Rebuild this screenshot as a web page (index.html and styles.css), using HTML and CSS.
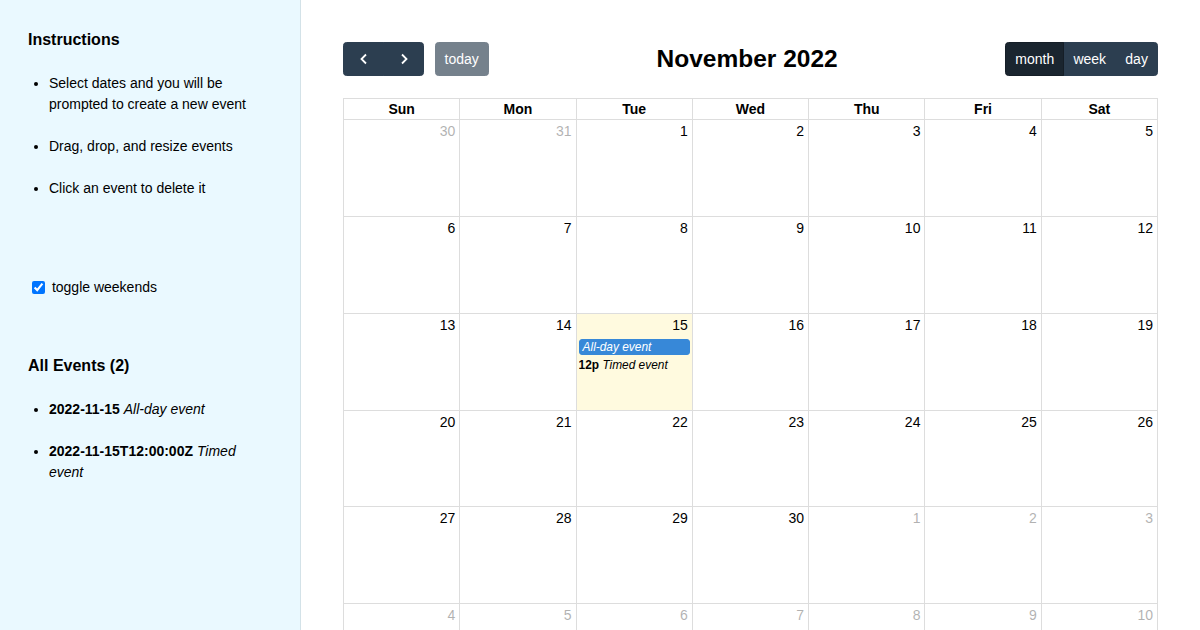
FILE: index.html
```html
<!DOCTYPE html>
<html lang="en">
<head>
    <meta charset="UTF-8">
    <meta name="viewport" content="width=device-width, initial-scale=1.0">
    <title>Calendar Demo</title>
    <link rel="stylesheet" href="styles.css">
</head>
<body>
    <div class="demo-app">
        <div class="sidebar">
            <div class="sidebar-section">
                <h2>Instructions</h2>
                <ul>
                    <li>Select dates and you will be prompted to create a new event</li>
                    <li>Drag, drop, and resize events</li>
                    <li>Click an event to delete it</li>
                </ul>
            </div>
            <div class="sidebar-section">
                <label class="toggle"><input type="checkbox" checked> toggle weekends</label>
            </div>
            <div class="sidebar-section">
                <h2>All Events (2)</h2>
                <ul>
                    <li><b>2022-11-15</b> <i>All-day event</i></li>
                    <li><b>2022-11-15T12:00:00Z</b> <i>Timed event</i></li>
                </ul>
            </div>
        </div>

        <div class="main">
            <div class="toolbar">
                <div class="toolbar-chunk">
                    <div class="btn-group">
                        <button class="btn btn-icon" title="Previous month">
                            <svg width="10" height="12" viewBox="0 0 10 12"><path d="M7 1.5 2.5 6 7 10.5" fill="none" stroke="#fff" stroke-width="1.8"/></svg>
                        </button>
                        <button class="btn btn-icon" title="Next month">
                            <svg width="10" height="12" viewBox="0 0 10 12"><path d="M3 1.5 7.5 6 3 10.5" fill="none" stroke="#fff" stroke-width="1.8"/></svg>
                        </button>
                    </div>
                    <button class="btn btn-today" disabled>today</button>
                </div>
                <h2 class="toolbar-title">November 2022</h2>
                <div class="toolbar-chunk">
                    <div class="btn-group">
                        <button class="btn active">month</button>
                        <button class="btn">week</button>
                        <button class="btn">day</button>
                    </div>
                </div>
            </div>

            <div class="month-grid">
                <div class="col-head">Sun</div>
                <div class="col-head">Mon</div>
                <div class="col-head">Tue</div>
                <div class="col-head">Wed</div>
                <div class="col-head">Thu</div>
                <div class="col-head">Fri</div>
                <div class="col-head">Sat</div>

                <div class="day other"><span class="day-number">30</span></div>
                <div class="day other"><span class="day-number">31</span></div>
                <div class="day"><span class="day-number">1</span></div>
                <div class="day"><span class="day-number">2</span></div>
                <div class="day"><span class="day-number">3</span></div>
                <div class="day"><span class="day-number">4</span></div>
                <div class="day"><span class="day-number">5</span></div>

                <div class="day"><span class="day-number">6</span></div>
                <div class="day"><span class="day-number">7</span></div>
                <div class="day"><span class="day-number">8</span></div>
                <div class="day"><span class="day-number">9</span></div>
                <div class="day"><span class="day-number">10</span></div>
                <div class="day"><span class="day-number">11</span></div>
                <div class="day"><span class="day-number">12</span></div>

                <div class="day"><span class="day-number">13</span></div>
                <div class="day"><span class="day-number">14</span></div>
                <div class="day today">
                    <span class="day-number">15</span>
                    <div class="event event-allday"><i>All-day event</i></div>
                    <div class="event event-timed"><b>12p</b> <i>Timed event</i></div>
                </div>
                <div class="day"><span class="day-number">16</span></div>
                <div class="day"><span class="day-number">17</span></div>
                <div class="day"><span class="day-number">18</span></div>
                <div class="day"><span class="day-number">19</span></div>

                <div class="day"><span class="day-number">20</span></div>
                <div class="day"><span class="day-number">21</span></div>
                <div class="day"><span class="day-number">22</span></div>
                <div class="day"><span class="day-number">23</span></div>
                <div class="day"><span class="day-number">24</span></div>
                <div class="day"><span class="day-number">25</span></div>
                <div class="day"><span class="day-number">26</span></div>

                <div class="day"><span class="day-number">27</span></div>
                <div class="day"><span class="day-number">28</span></div>
                <div class="day"><span class="day-number">29</span></div>
                <div class="day"><span class="day-number">30</span></div>
                <div class="day other"><span class="day-number">1</span></div>
                <div class="day other"><span class="day-number">2</span></div>
                <div class="day other"><span class="day-number">3</span></div>

                <div class="day other"><span class="day-number">4</span></div>
                <div class="day other"><span class="day-number">5</span></div>
                <div class="day other"><span class="day-number">6</span></div>
                <div class="day other"><span class="day-number">7</span></div>
                <div class="day other"><span class="day-number">8</span></div>
                <div class="day other"><span class="day-number">9</span></div>
                <div class="day other"><span class="day-number">10</span></div>
            </div>
        </div>
    </div>
</body>
</html>
```

FILE: styles.css
```css
* {
    box-sizing: border-box;
}

body {
    margin: 0;
    padding: 0;
    font-family: "Liberation Sans", Arial, Helvetica, sans-serif;
    font-size: 14px;
    color: #000;
}

.demo-app {
    display: flex;
    min-height: 100vh;
}

.sidebar {
    width: 301px;
    flex-shrink: 0;
    line-height: 1.5;
    background: #eaf9ff;
    border-right: 1px solid #d3e2e8;
}

.sidebar-section {
    padding: 2em;
}

.sidebar h2 {
    margin: 0;
    font-size: 16px;
}

.sidebar ul {
    margin: 0;
    padding: 0 0 0 1.5em;
}

.sidebar li {
    margin: 1.5em 0;
    padding: 0;
}

.toggle {
    display: block;
    padding-top: 1px;
}

.toggle input[type="checkbox"] {
    margin: 3px 3px 3px 4px;
    vertical-align: -2px;
}

.main {
    flex-grow: 1;
    padding: 3em;
}

.toolbar {
    display: flex;
    justify-content: space-between;
    align-items: center;
    margin-bottom: 22px;
}

.toolbar-chunk {
    display: flex;
    align-items: center;
}

.toolbar-title {
    margin: 0;
    font-size: 1.75em;
    font-weight: bold;
}

.btn-group {
    display: inline-flex;
}

.btn {
    font-family: inherit;
    font-size: 1em;
    line-height: 1.5;
    padding: 0.4em 0.65em;
    color: #fff;
    background: #2c3e50;
    border: 1px solid #2c3e50;
    border-radius: 0.25em;
    cursor: pointer;
}

.btn-group .btn {
    border-radius: 0;
}

.btn-group .btn + .btn {
    margin-left: -1px;
}

.btn-group .btn:first-child {
    border-top-left-radius: 0.25em;
    border-bottom-left-radius: 0.25em;
}

.btn-group .btn:last-child {
    border-top-right-radius: 0.25em;
    border-bottom-right-radius: 0.25em;
}

.btn.active {
    position: relative;
    background: #1a252f;
    border-color: #151e27;
}

.btn-icon {
    width: 41px;
    height: 34px;
    display: flex;
    align-items: center;
    justify-content: center;
}

.btn-today {
    margin-left: 0.75em;
    opacity: 0.65;
    cursor: default;
}

.month-grid {
    display: grid;
    grid-template-columns: repeat(7, 1fr);
    grid-template-rows: 21px repeat(6, 96.8px);
    border-top: 1px solid #ddd;
    border-left: 1px solid #ddd;
}

.col-head {
    padding: 2px 4px 1px;
    text-align: center;
    font-weight: bold;
    border-right: 1px solid #ddd;
    border-bottom: 1px solid #ddd;
}

.day {
    display: flex;
    flex-direction: column;
    border-right: 1px solid #ddd;
    border-bottom: 1px solid #ddd;
}

.day-number {
    padding: 3px 4px 5px;
    text-align: right;
}

.day.other .day-number {
    opacity: 0.3;
}

.day.today {
    background: rgba(255, 220, 40, 0.15);
}

.event {
    margin: 1px 2px 0;
    font-size: 0.85em;
    white-space: nowrap;
    overflow: hidden;
}

.event-allday {
    padding: 0 3px;
    color: #fff;
    background: #3788d8;
    border: 1px solid #3788d8;
    border-radius: 3px;
}

.event-timed {
    padding: 2px 0;
}
```
